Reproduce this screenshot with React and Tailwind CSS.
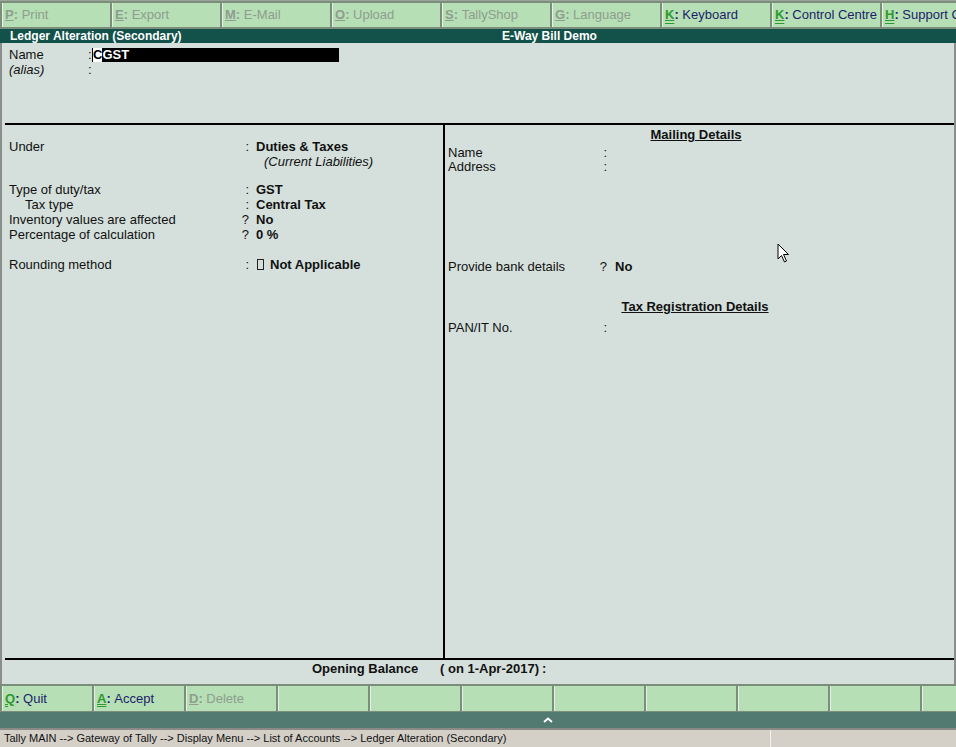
import React from "react";

const topButtons = [
  { k: "P", label: "Print", on: false },
  { k: "E", label: "Export", on: false },
  { k: "M", label: "E-Mail", on: false },
  { k: "O", label: "Upload", on: false },
  { k: "S", label: "TallyShop", on: false },
  { k: "G", label: "Language", on: false },
  { k: "K", label: "Keyboard", on: true },
  { k: "K", label: "Control Centre", on: true },
  { k: "H", label: "Support Centre", on: true },
];

const bottomButtons = [
  { k: "Q", label: "Quit", on: true },
  { k: "A", label: "Accept", on: true },
  { k: "D", label: "Delete", on: false },
  {}, {}, {}, {}, {}, {}, {}, {},
];

const KeyButton = ({ k, label, on, width }) => (
  <div
    className={`${width} shrink-0 h-full bg-[#b6dfb5] border-l border-l-[#e2f2e1] flex items-center pl-[2px] whitespace-nowrap overflow-hidden text-[13px]`}
  >
    {k && (
      <>
        <span className={on ? "font-bold text-[#2f9a2f] underline decoration-double" : "font-bold text-[#8e9d8e] underline"}>{k}</span>
        <span className={on ? "font-bold text-[#1d1d6c]" : "font-bold text-[#8e9d8e]"}>:</span>
        <span className={on ? "text-[#1d1d6c]" : "text-[#8e9d8e]"}>&nbsp;{label}</span>
      </>
    )}
  </div>
);

// label / separator / value row of the ledger form
const Row = ({ label, sep = ":", children, indent = false, labelW = "w-[228px]", sepW = "w-[12px]", valuePad = "pl-[7px]" }) => (
  <div className="flex h-[15px] items-center leading-[15px]">
    <span className={`${labelW} shrink-0 ${indent ? "pl-[16px]" : ""}`}>{label}</span>
    <span className={`${sepW} shrink-0 text-right`}>{sep}</span>
    <span className={`${valuePad} font-bold flex items-center`}>{children}</span>
  </div>
);

const RightRow = ({ label, sep = ":", children }) => (
  <Row label={label} sep={sep} labelW="w-[150px]" sepW="w-[9px]" valuePad="pl-[8px]">
    {children}
  </Row>
);

const MouseArrow = () => (
  <svg className="absolute left-[777px] top-[243px]" width="14" height="21" viewBox="0 0 14 21">
    <path d="M1 1 L1 16 L4.5 12.5 L7.5 19 L9.5 18 L6.5 11.5 L11.5 11.5 Z" fill="#fff" stroke="#000" strokeWidth="1" strokeLinejoin="round" />
  </svg>
);

export default function App() {
  return (
    <div className="relative w-[956px] h-[747px] overflow-hidden flex flex-col bg-[#808c80] font-['Liberation_Sans',Arial,sans-serif] text-[13px] text-[#111]">
      {/* function keys along the top */}
      <div className="h-[29px] shrink-0 flex gap-[2px] pl-[2px] pt-[2px] pb-[2px] bg-[#7c8d7c] border-t border-t-[#9aa69a]">
        {topButtons.map((b, i) => (
          <KeyButton key={i} {...b} width="w-[108px]" />
        ))}
      </div>

      {/* title bar */}
      <div className="h-[14px] shrink-0 flex items-center bg-[#12524a] text-white font-bold text-[12px] leading-[14px]">
        <span className="w-[502px] pl-[10px]">Ledger Alteration (Secondary)</span>
        <span>E-Way Bill Demo</span>
      </div>

      {/* form body */}
      <div className="flex-1 flex flex-col bg-[#d5e0dc] border-x-2 border-[#8a8f8c]">
        <div className="h-[80px] shrink-0 pl-[7px] pt-[5px]">
          <div className="flex h-[14px] items-center">
            <span className="w-[79px]">Name</span>
            <span className="w-[4px]">:</span>
            <div className="w-[247px] h-[14px] bg-black flex items-center pl-[1px] font-bold text-white leading-[14px]">
              <span className="bg-white text-black">C</span>
              <span>GST</span>
            </div>
          </div>
          <div className="flex h-[15px] items-center">
            <span className="w-[79px] italic">(alias)</span>
            <span>:</span>
          </div>
        </div>

        <div className="flex-1 ml-[3px] flex border-y-2 border-black">
          <div className="w-[440px] shrink-0 border-r-2 border-black pl-[4px] pt-[14px]">
            <Row label="Under">Duties &amp; Taxes</Row>
            <div className="h-[15px] leading-[15px] pl-[255px] italic">(Current Liabilities)</div>
            <div className="mt-[13px]">
              <Row label="Type of duty/tax">GST</Row>
              <Row label="Tax type" indent>Central Tax</Row>
              <Row label="Inventory values are affected" sep="?">No</Row>
              <Row label="Percentage of calculation" sep="?">0 %</Row>
            </div>
            <div className="mt-[15px]">
              <Row label="Rounding method">
                <span className="inline-block w-[7px] h-[11px] border border-[#222] mr-[6px] ml-[1px]" />
                Not Applicable
              </Row>
            </div>
          </div>

          <div className="flex-1 pl-[3px] pt-[1px]">
            <div className="h-[18px] leading-[18px] text-center font-bold underline pr-[10px]">Mailing Details</div>
            <div className="leading-[14px] mt-[2px]">
              <div className="flex h-[14px] items-center">
                <span className="w-[150px]">Name</span>
                <span className="w-[9px] text-right">:</span>
              </div>
              <div className="flex h-[14px] items-center">
                <span className="w-[150px]">Address</span>
                <span className="w-[9px] text-right">:</span>
              </div>
            </div>
            <div className="mt-[85px]">
              <RightRow label="Provide bank details" sep="?">No</RightRow>
            </div>
            <div className="mt-[24px] h-[18px] leading-[18px] text-center font-bold underline pr-[12px]">Tax Registration Details</div>
            <div className="mt-[4px]">
              <RightRow label="PAN/IT No.">{""}</RightRow>
            </div>
          </div>
        </div>

        <div className="h-[24px] shrink-0 flex items-start pt-[1px] pl-[310px] font-bold leading-[15px]">
          <span className="w-[128px]">Opening Balance</span>
          <span className="w-[102px]">( on 1-Apr-2017)</span>
          <span>:</span>
        </div>
      </div>

      {/* button bar */}
      <div className="h-[28px] shrink-0 flex gap-[2px] pl-[2px] pt-[2px] pb-[1px] bg-[#7c8d7c]">
        {bottomButtons.map((b, i) => (
          <KeyButton key={i} {...b} width="w-[90px]" />
        ))}
      </div>

      <div className="h-[16px] shrink-0 bg-[#537a70] flex items-center">
        <svg className="ml-[543px]" width="10" height="6" viewBox="0 0 10 6">
          <path d="M1 5 L5 1.5 L9 5" fill="none" stroke="#fff" strokeWidth="2" />
        </svg>
      </div>

      {/* status bar */}
      <div className="h-[19px] shrink-0 flex border-t-2 border-[#8c8a86] bg-[#d4d0c8] text-[11px] text-[#111] leading-[16px]">
        <span className="w-[770px] pl-[4px] whitespace-nowrap">
          Tally MAIN --&gt; Gateway of Tally --&gt; Display Menu --&gt; List of Accounts --&gt; Ledger Alteration (Secondary)
        </span>
        <span className="border-l border-l-[#f4f2ee] flex-1" />
      </div>

      <MouseArrow />
    </div>
  );
}
